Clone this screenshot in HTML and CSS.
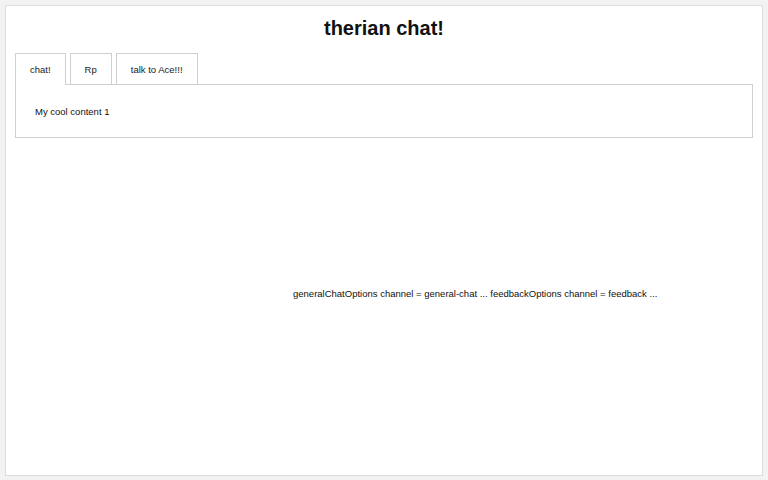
FILE: index.html
```html
<!DOCTYPE html>
<html lang="en">
<head>
    <meta charset="UTF-8">
    <meta name="viewport" content="width=device-width, initial-scale=1.0">
    <title>therian chat!</title>
    <link rel="stylesheet" href="styles.css">
</head>
<body>
    <div class="container">
        <h1>therian chat!</h1>
        <div class="tabs">
            <button class="tab active">chat!</button>
            <button class="tab">Rp</button>
            <button class="tab">talk to Ace!!!</button>
        </div>
        <div class="panel">
            <p>My cool content 1</p>
        </div>
        <div class="options">
            generalChatOptions channel = general-chat ... feedbackOptions channel = feedback ...
        </div>
    </div>
</body>
</html>
```

FILE: styles.css
```css
body {
    font-family: "Liberation Sans", Arial, sans-serif;
    background-color: #f2f2f2;
    margin: 0;
    padding: 5px;
}
.container {
    background: white;
    border: 1px solid #dcdcdc;
    padding: 0 9px;
    height: 471px;
    box-sizing: border-box;
}
h1 {
    font-size: 20px;
    color: #111;
    text-align: center;
    margin: 11px 0 13px;
}
.tabs {
    display: flex;
    gap: 4px;
}
.tab {
    font-family: inherit;
    font-size: 9.5px;
    color: #222;
    background: white;
    border: 1px solid #cfcfcf;
    border-bottom: none;
    height: 31px;
    padding: 0 14px;
    margin-bottom: -1px;
    position: relative;
}
.tab.active {
    height: 32px;
    z-index: 1;
}
.panel {
    border: 1px solid #cfcfcf;
    padding: 0 19px;
    height: 52px;
    display: flex;
    align-items: center;
}
.panel p {
    font-size: 9.5px;
    color: #111;
    margin: 0;
}
.options {
    font-size: 9.5px;
    color: #111;
    margin-top: 150px;
    padding-left: 278px;
}
```
